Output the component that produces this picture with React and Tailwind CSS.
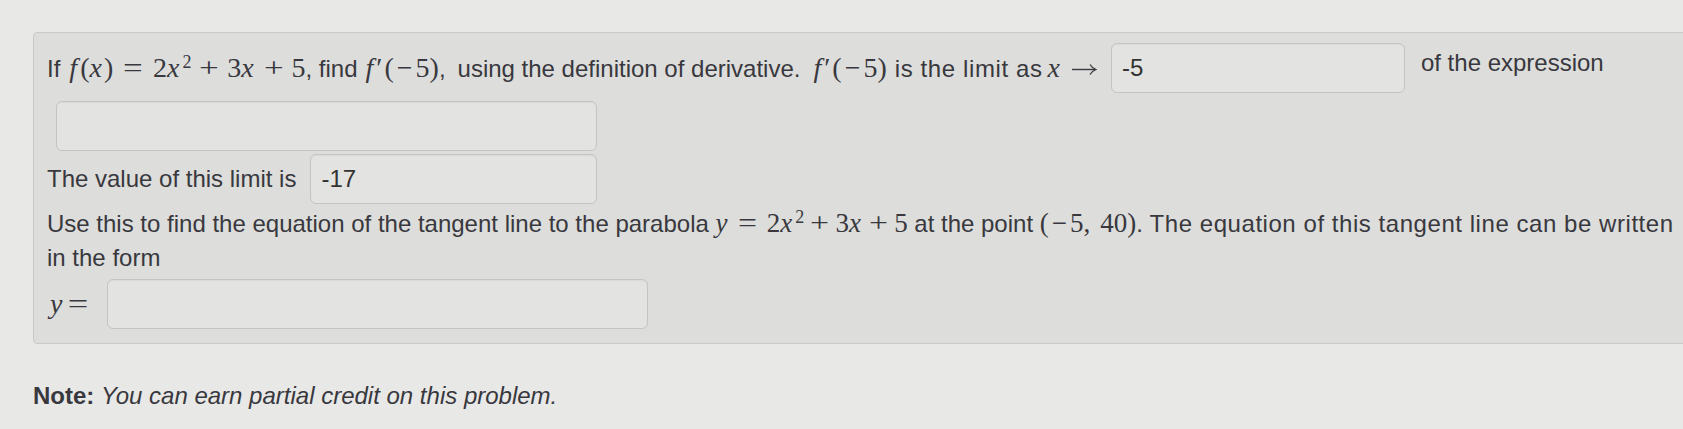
export default function App() {
  const serif = { fontFamily: '"Liberation Serif", "DejaVu Serif", serif' };
  const V = ({ children, pad = "pr-[2px]", size = "text-[27px]" }) => (
    <span className={"italic " + size + " " + pad} style={serif}>
      {children}
    </span>
  );
  const N = ({ children, size = "text-[27px]", className = "" }) => (
    <span className={size + " " + className} style={serif}>
      {children}
    </span>
  );
  const Op = ({ children, size = "text-[27px]", m }) => (
    <span className={"inline-block scale-x-[1.25] " + size + " " + m} style={serif}>
      {children}
    </span>
  );
  const Sq = () => (
    <sup className="text-[18px] ml-[1px]" style={serif}>
      2
    </sup>
  );
  const FPrime = ({ size }) => (
    <>
      <V pad="pr-[3px]" size={size}>
        f
      </V>
      <N size={size} className="mr-[2px]">
        ′
      </N>
      <N size={size}>(</N>
      <N size={size} className="mx-[3px]">
        −
      </N>
      <N size={size}>5)</N>
    </>
  );
  const Poly = ({ size, bin }) => (
    <>
      <N size={size}>2</N>
      <V size={size}>x</V>
      <Sq />
      <Op size={size} m={bin}>
        +
      </Op>
      <N size={size}>3</N>
      <V size={size}>x</V>
      <Op size={size} m={bin}>
        +
      </Op>
      <N size={size}>5</N>
    </>
  );
  const Arrow = () => (
    <svg width="25" height="14" viewBox="0 0 25 14" className="inline-block ml-[10px] -mt-[3px]">
      <path d="M0 7.5H23" stroke="#38383e" strokeWidth="1.4" fill="none" />
      <path d="M18 2.5Q20 6 24 7.5Q20 9 18 12.5" stroke="#38383e" strokeWidth="1.3" fill="none" />
    </svg>
  );
  const Box = ({ value, className }) => (
    <div
      className={
        "h-[50px] rounded-md border border-[#c4c4c2] bg-[#e3e3e1] flex items-center px-[10px] text-[24px] text-[#333] shadow-[inset_0_1px_1px_rgba(0,0,0,0.04)] " +
        className
      }
    >
      {value}
    </div>
  );

  return (
    <div
      className="w-[1683px] h-[429px] overflow-hidden bg-[#e8e8e6] text-[#38383e] text-[24px] pt-[32px] pl-[33px]"
      style={{ fontFamily: '"Liberation Sans", Arial, sans-serif' }}
    >
      <div className="w-[1700px] bg-[#dddddb] border border-[#c9c9c7] rounded-sm pl-[13px] pt-[9px] pb-[14px]">
        <div className="flex items-center h-[51px] whitespace-nowrap">
          <span>
            <span>If</span>
            <span className="ml-[9px]" />
            <V pad="pr-[3px]" size="text-[28px]">
              f
            </V>
            <N size="text-[28px]">(</N>
            <V size="text-[28px]">x</V>
            <N size="text-[28px]">)</N>
            <Op size="text-[28px]" m="mx-[12px]">
              =
            </Op>
            <Poly size="text-[28px]" bin="mx-[10px]" />
            <span>, find</span>
            <span className="ml-[8px]" />
            <FPrime size="text-[28px]" />
            <span>,</span>
            <span className="ml-[12px]">using the definition of derivative.</span>
            <span className="ml-[13px]" />
            <FPrime size="text-[28px]" />
            <span className="ml-[8px] tracking-[0.6px]">is the limit as</span>
            <span className="ml-[5px]" />
            <V size="text-[28px]">x</V>
            <Arrow />
          </span>
          <Box value="-5" className="w-[294px] ml-[14px] shrink-0" />
          <span className="ml-[16px] -mt-[10px]">of the expression</span>
        </div>
        <Box value="" className="w-[541px] ml-[9px] mt-[8px]" />
        <div className="flex items-center mt-[3px]">
          <span>The value of this limit is</span>
          <Box value="-17" className="w-[287px] ml-[14px]" />
        </div>
        <div className="mt-[2px] leading-[34px] whitespace-nowrap">
          Use this to find the equation of the tangent line to the parabola <V>y</V>
          <Op m="mx-[11px]">=</Op>
          <Poly bin="mx-[8px]" /> at the point <N>(</N>
          <N className="mx-[3px]">−</N>
          <N>5,</N>
          <N className="ml-[10px]">40)</N>.{" "}
          <span className="tracking-[0.55px]">The equation of this tangent line can be written</span>
          <br />
          in the form
        </div>
        <div className="flex items-center mt-[4px]">
          <span style={serif} className="w-[60px] text-[28px] pl-[3px]">
            <span className="italic">y</span>
            <span className="inline-block scale-x-[1.3] ml-[8px]">=</span>
          </span>
          <Box value="" className="w-[541px]" />
        </div>
      </div>
      <div className="mt-[34px] text-[24px]">
        <span className="font-bold">Note:</span> <span className="italic">You can earn partial credit on this problem.</span>
      </div>
    </div>
  );
}
